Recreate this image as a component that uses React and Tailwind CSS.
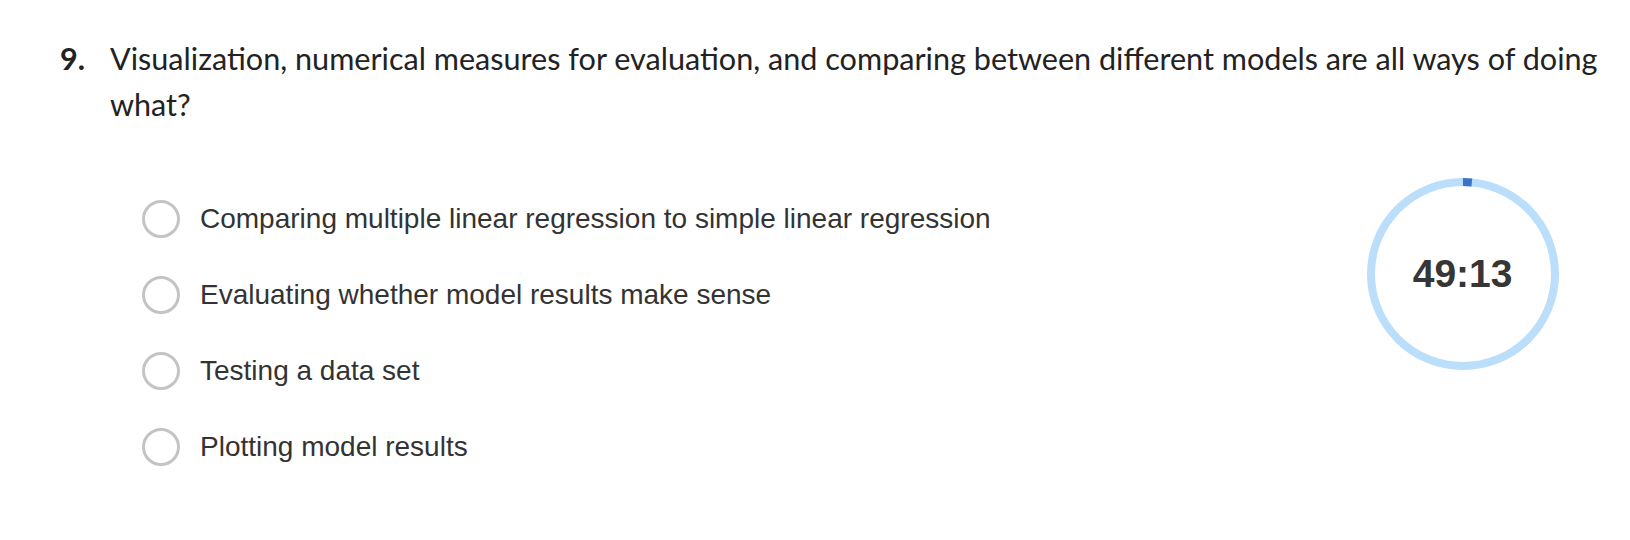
export default function App() {
  const options = [
    'Comparing multiple linear regression to simple linear regression',
    'Evaluating whether model results make sense',
    'Testing a data set',
    'Plotting model results',
  ];

  const r = 92;
  const circ = 2 * Math.PI * r;

  return (
    <div className="min-h-screen bg-white pt-[36px] pl-[60px]">
      {/* Question */}
      <div className="flex font-['Lato','Noto_Sans',sans-serif] text-[30.6px] leading-[46px] text-[#222]">
        <span className="w-[50px] shrink-0 font-bold">9.</span>
        <p className="w-[1500px]">
          Visualization, numerical measures for evaluation, and comparing between different models are all ways of doing what?
        </p>
      </div>

      {/* Answers + timer */}
      <div className="mt-[50px] flex items-start">
        <div className="pl-[82px] pt-[3px] flex flex-col font-['Liberation_Sans',Arial,sans-serif] text-[28px] text-[#333]">
          {options.map((opt) => (
            <label key={opt} className="flex h-[76px] items-center gap-[20px] cursor-pointer">
              <span className="h-[38px] w-[38px] shrink-0 rounded-full border-[3px] border-[#c4c4c4] bg-white"></span>
              <span>{opt}</span>
            </label>
          ))}
        </div>

        <div className="relative ml-[376px] h-[192px] w-[192px]">
          <svg width="192" height="192" viewBox="0 0 192 192" className="-rotate-90">
            <circle cx="96" cy="96" r={r} fill="none" stroke="#bbdefb" strokeWidth="8" />
            <circle
              cx="96"
              cy="96"
              r={r}
              fill="none"
              stroke="#3b73c9"
              strokeWidth="8"
              strokeDasharray={`9 ${circ}`}
            />
          </svg>
          <div className="absolute inset-0 flex items-center justify-center font-['Liberation_Sans',Arial,sans-serif] text-[39px] font-bold text-[#363636]">
            49:13
          </div>
        </div>
      </div>
    </div>
  );
}
